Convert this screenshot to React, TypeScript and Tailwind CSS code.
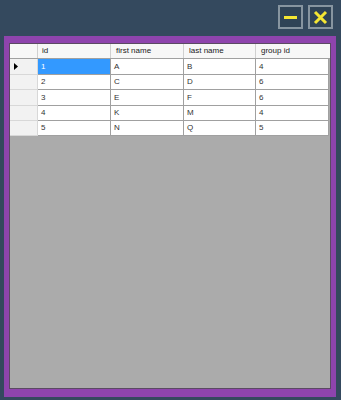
import React from "react";

const rows = [
  ["1", "A", "B", "4"],
  ["2", "C", "D", "6"],
  ["3", "E", "F", "6"],
  ["4", "K", "M", "4"],
  ["5", "N", "Q", "5"],
];

const heights = ["h-[16px]", "h-[15px]", "h-[16px]", "h-[15px]", "h-[15px]"];

export default function App() {
  return (
    <div className="w-[341px] h-[400px] bg-[#34495e] overflow-hidden flex flex-col font-['Liberation_Sans',Arial,sans-serif]">
      <div className="flex justify-end gap-[5px] pt-[5px] pr-[8px]">
        <button className="w-[25px] h-[24px] border-2 border-[#8795a0] bg-[#2f4356] flex items-center justify-center">
          <span className="block w-[13px] h-[3px] bg-[#f4e633]" />
        </button>
        <button className="w-[25px] h-[24px] border-2 border-[#8795a0] bg-[#2f4356] flex items-center justify-center">
          <svg width="15" height="15" viewBox="0 0 15 15">
            <path d="M2 2 L13 13 M13 2 L2 13" stroke="#f4e633" strokeWidth="3" />
          </svg>
        </button>
      </div>

      <div className="mt-[7px] ml-[4px] mr-[5px] h-[361px] bg-[#8e44ad] pt-[7px] pl-[5px] pr-[5px] pb-[8px]">
        <div className="w-full h-full border border-[#5b4a63] bg-[#ababab] flex flex-col">
          <div className="flex h-[15px] bg-[#f7f7f7] border-b border-[#a0a0a0] text-[8px] text-[#222]">
            <div className="w-[28px] border-r border-[#d0d0d0]" />
            <div className="w-[73px] pl-[4px] flex items-center border-r border-[#d0d0d0]">id</div>
            <div className="w-[73px] pl-[5px] flex items-center border-r border-[#d0d0d0]">first name</div>
            <div className="w-[72px] pl-[5px] flex items-center border-r border-[#d0d0d0]">last name</div>
            <div className="w-[73px] pl-[5px] flex items-center">group id</div>
          </div>
          {rows.map((r, i) => (
            <div key={i} className={`flex ${heights[i]} text-[8px] text-[#333]`}>
              <div className="w-[28px] bg-[#f2f2f2] border-r border-b border-[#d8d8d8] flex items-center pl-[4px]">
                {i === 0 && (
                  <svg width="4" height="7" viewBox="0 0 4 7">
                    <path d="M0 0 L4 3.5 L0 7 Z" fill="#000" />
                  </svg>
                )}
              </div>
              {r.map((v, j) => (
                <div
                  key={j}
                  className={`${j === 2 ? "w-[72px]" : "w-[73px]"} pl-[3px] flex items-center border-r border-b border-[#a0a0a0] ${
                    i === 0 && j === 0 ? "bg-[#3399ff] text-white" : "bg-white"
                  }`}
                >
                  {v}
                </div>
              ))}
            </div>
          ))}
        </div>
      </div>
    </div>
  );
}
